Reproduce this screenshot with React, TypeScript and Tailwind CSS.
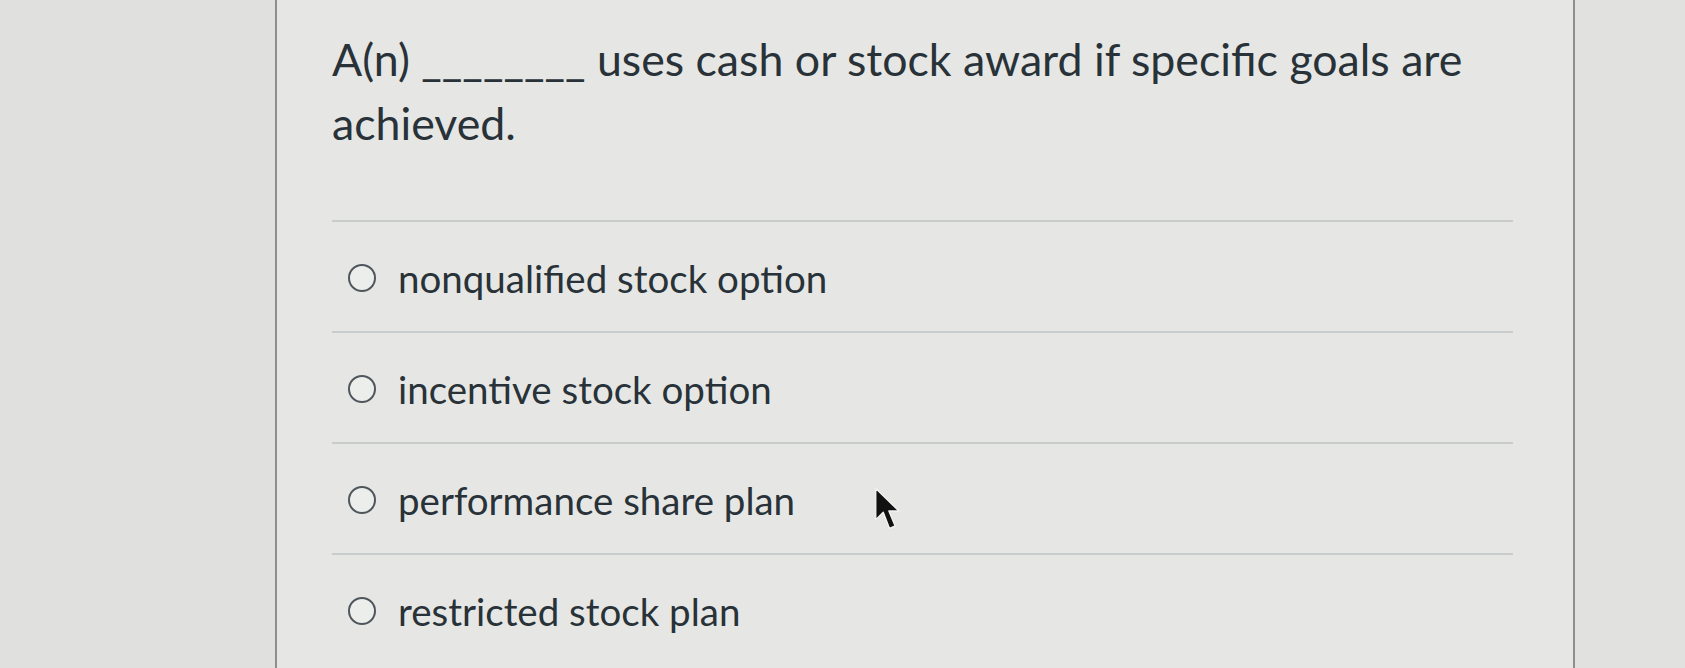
import React from 'react';

const options = [
  'nonqualified stock option',
  'incentive stock option',
  'performance share plan',
  'restricted stock plan',
];

const Cursor: React.FC = () => (
  <svg width="28" height="50" viewBox="0 0 22 40" className="absolute left-[873px] top-[486px]">
    <path
      d="M2 2 L2 27 L8 21 L13 34 L17.5 32 L12.5 20 L20.5 20 Z"
      fill="#111"
      stroke="#f2f2f2"
      strokeWidth="1.1"
      strokeLinejoin="round"
    />
  </svg>
);

const App: React.FC = () => {
  return (
    <div
      className="relative flex h-[668px] w-[1685px] overflow-hidden bg-[#e2e3e0] text-[#283238]"
      style={{ fontFamily: 'Lato, "Noto Sans", sans-serif' }}
    >
      {/* left gutter */}
      <div className="w-[275px] shrink-0 bg-[#e0e1de]" />

      {/* quiz panel */}
      <div className="w-[1300px] shrink-0 border-x-2 border-[#8b8f90] bg-[#e6e7e4] pl-[55px] pr-[60px] pt-[27px]">
        <p className="text-[44.7px] leading-[64px]">
          A(n) ________ uses cash or stock award if specific goals are achieved.
        </p>

        <div className="mt-[65px]">
          {options.map((opt) => (
            <div
              key={opt}
              className="flex h-[111px] items-center border-t-2 border-[#c9cccc] pt-[3px]"
            >
              <span className="ml-[16px] h-[28px] w-[28px] shrink-0 rounded-full border-[2.5px] border-[#4f575c] bg-[#eceeec]" />
              <span className="ml-[22px] text-[38.5px] leading-none">{opt}</span>
            </div>
          ))}
        </div>
      </div>

      {/* right gutter */}
      <div className="flex-1 bg-[#e1e2df]" />

      <Cursor />
    </div>
  );
};

export default App;
